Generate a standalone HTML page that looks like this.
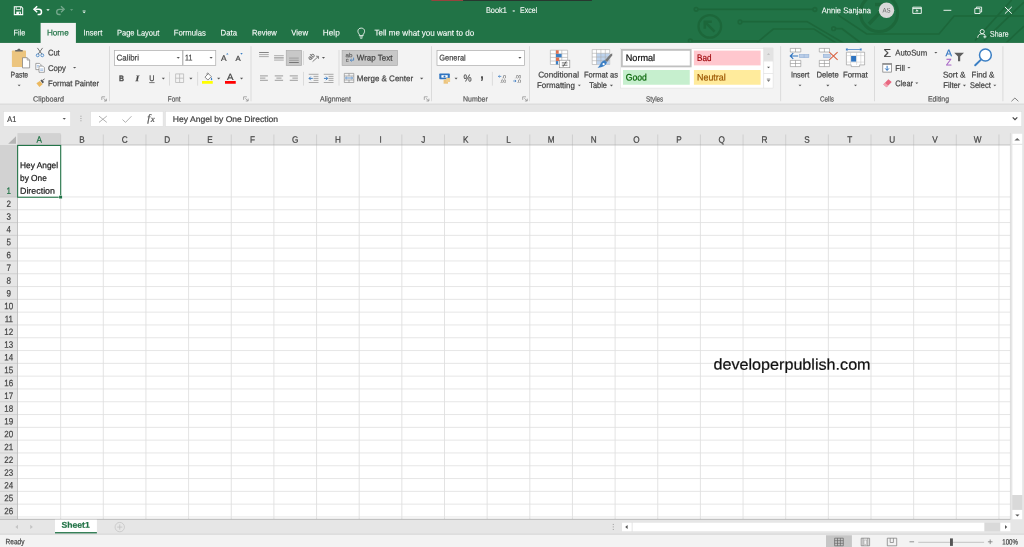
<!DOCTYPE html>
<html lang="en"><head><meta charset="utf-8"><title>Book1 - Excel</title>
<style>
html,body{margin:0;padding:0;background:#e6e6e6;overflow:hidden}
#app{position:relative;width:1024px;height:547px;overflow:hidden;font-family:"Liberation Sans",sans-serif}
#art{position:absolute;left:0;top:0}
#labels{position:absolute;left:0;top:0;width:1024px;height:547px;will-change:transform}
.t{position:absolute;left:0;top:0;white-space:nowrap;line-height:1;-webkit-text-stroke:.22px currentColor;transform-origin:0 0;font-family:"Liberation Sans",sans-serif}
</style></head>
<body>
<div id="app">
<svg id="art" width="1024" height="547" viewBox="0 0 1024 547">
<rect x="0.00" y="0.00" width="1024.00" height="547.00" fill="#e6e6e6" />
<rect x="0.00" y="0.00" width="1024.00" height="42.90" fill="#217346" />
<g fill="none" stroke="#1c6539" stroke-width="1.7" opacity=".85"><circle cx="696.1" cy="9.3" r="1.8"/><path d="M698 9.3H813"/><circle cx="814.9" cy="9.5" r="1.8"/><circle cx="709.8" cy="26.4" r="11.3" stroke-width="2.3"/><path d="M714.6 31.6L705 22M704.8 28.8V21.8H711.8" stroke-width="2.6"/><circle cx="740" cy="22" r="1.8"/><path d="M741.8 21.6H807L843.5 43"/><path d="M757 42.6L773.3 29H814L836 43"/><circle cx="833.6" cy="28.7" r="1.8"/><path d="M835.4 28.7H842L861 43"/><circle cx="690.3" cy="41" r="1.8"/><path d="M692.1 41H758"/><path d="M838 15L866.7 34H939L954.1 16H1024"/><circle cx="879" cy="12.9" r="18.6" stroke-width="3.2"/><path d="M869 24L886 6M875 4.500H887.5V17" stroke-width="3.4"/><path d="M1011.7 0L975 40.6M1024 2L984 40.6M1024 26L1006 43"/></g>
<rect x="431.40" y="0.00" width="31.70" height="0.80" fill="#b5373c" />
<rect x="463.10" y="0.00" width="128.80" height="0.80" fill="#2a2a2a" />
<line x1="0.00" y1="42.50" x2="1024.00" y2="42.50" stroke="#1a693c" stroke-width="0.9" />
<rect x="40.60" y="22.90" width="35.30" height="20.30" fill="#f3f3f3" />
<rect x="0.00" y="42.90" width="1024.00" height="60.90" fill="#f3f3f3" />
<line x1="0.00" y1="104.10" x2="1024.00" y2="104.10" stroke="#d2d2d2" stroke-width="0.7" />
<path d="M14.3 6.8H21.4L22.7 8.1V14.6H14.3Z" fill="none" stroke="#fff" stroke-width="1.05" />
<rect x="16.30" y="11.60" width="4.50" height="3.00" fill="#fff" />
<rect x="18.90" y="12.50" width="1.10" height="1.40" fill="#217346" />
<path d="M16.2 7V9.6H20.6V7" fill="none" stroke="#fff" stroke-width="0.8" />
<path d="M35.2 9.3H38.9A2.6 2.6 0 0 1 38.9 14.5H37.6" fill="none" stroke="#fff" stroke-width="1.5" />
<path d="M37.2 6.3L34 9.3L37.2 12.3" fill="none" stroke="#fff" stroke-width="1.5" />
<path d="M46.30 9.20H49.70L48.00 10.97Z" fill="#fff" stroke="none" stroke-width="1" />
<g opacity=".38">
<path d="M63 9.3H59.3A2.6 2.6 0 0 0 59.3 14.5H60.6" fill="none" stroke="#fff" stroke-width="1.3" />
<path d="M61 6.3L64.2 9.3L61 12.3" fill="none" stroke="#fff" stroke-width="1.3" />
<path d="M70.00 9.20H73.20L71.60 10.86Z" fill="#fff" stroke="none" stroke-width="1" />
</g>
<line x1="82.60" y1="10.90" x2="85.60" y2="10.90" stroke="#fff" stroke-width="0.7" />
<path d="M82.60 11.80H85.60L84.10 13.30Z" fill="#fff" stroke="none" stroke-width="1" />
<circle cx="886.50" cy="10.20" r="7.70" fill="#d9d9d9" stroke="none" stroke-width="1" />
<path d="M912.8 7.2H921.3V13.4H912.8Z" fill="none" stroke="#fff" stroke-width="0.9" />
<line x1="912.80" y1="8.60" x2="921.30" y2="8.60" stroke="#fff" stroke-width="0.9" />
<path d="M917 12.4V9.9M915.6 11.2L917 9.8L918.4 11.2" fill="none" stroke="#fff" stroke-width="0.8" />
<line x1="943.50" y1="10.30" x2="951.30" y2="10.30" stroke="#fff" stroke-width="0.9" />
<path d="M974.8 8.6H980V13.5H974.8Z" fill="none" stroke="#fff" stroke-width="0.85" />
<path d="M976.4 8.4V7.1H981.6V12H980.2" fill="none" stroke="#fff" stroke-width="0.85" />
<path d="M1004.9 6.9L1011.8 13.7M1011.8 6.9L1004.9 13.7" fill="none" stroke="#fff" stroke-width="0.95" />
<path d="M359.3 34.2C357.2 32.3 357.3 28.2 361.25 28.1C365.2 28.2 365.3 32.3 363.2 34.2V35.6H359.3Z" fill="none" stroke="#fff" stroke-width="0.85" />
<path d="M359.6 36.9H362.9M360.2 38.2H362.3" fill="none" stroke="#fff" stroke-width="0.8" />
<circle cx="982.20" cy="31.60" r="2.10" fill="none" stroke="#fff" stroke-width="0.85" />
<path d="M977.7 37.8C977.9 34.6 980 33.9 982.2 33.9C983.6 33.9 984.6 34.3 985.2 35" fill="none" stroke="#fff" stroke-width="0.85" />
<path d="M984.9 35.2V38.3M983.3 36.8H986.5" fill="none" stroke="#fff" stroke-width="0.8" />
<line x1="109.50" y1="46.25" x2="109.50" y2="101.25" stroke="#d4d4d4" stroke-width="0.8" />
<line x1="251.00" y1="46.25" x2="251.00" y2="101.25" stroke="#d4d4d4" stroke-width="0.8" />
<line x1="431.50" y1="46.25" x2="431.50" y2="101.25" stroke="#d4d4d4" stroke-width="0.8" />
<line x1="529.50" y1="46.25" x2="529.50" y2="101.25" stroke="#d4d4d4" stroke-width="0.8" />
<line x1="780.60" y1="46.25" x2="780.60" y2="101.25" stroke="#d4d4d4" stroke-width="0.8" />
<line x1="874.50" y1="46.25" x2="874.50" y2="101.25" stroke="#d4d4d4" stroke-width="0.8" />
<line x1="1002.90" y1="46.25" x2="1002.90" y2="101.25" stroke="#d4d4d4" stroke-width="0.8" />
<path d="M105.10 96.80H101.80V99.90" fill="none" stroke="#777" stroke-width="0.6" />
<path d="M103.50 98.40L106.10 100.70" fill="none" stroke="#777" stroke-width="0.6" />
<path d="M106.40 98.70V101.00H104.00" fill="none" stroke="#777" stroke-width="0.6" />
<path d="M246.90 96.80H243.60V99.90" fill="none" stroke="#777" stroke-width="0.6" />
<path d="M245.30 98.40L247.90 100.70" fill="none" stroke="#777" stroke-width="0.6" />
<path d="M248.20 98.70V101.00H245.80" fill="none" stroke="#777" stroke-width="0.6" />
<path d="M427.60 96.80H424.30V99.90" fill="none" stroke="#777" stroke-width="0.6" />
<path d="M426.00 98.40L428.60 100.70" fill="none" stroke="#777" stroke-width="0.6" />
<path d="M428.90 98.70V101.00H426.50" fill="none" stroke="#777" stroke-width="0.6" />
<path d="M526.00 96.80H522.70V99.90" fill="none" stroke="#777" stroke-width="0.6" />
<path d="M524.40 98.40L527.00 100.70" fill="none" stroke="#777" stroke-width="0.6" />
<path d="M527.30 98.70V101.00H524.90" fill="none" stroke="#777" stroke-width="0.6" />
<rect x="11.90" y="50.60" width="14.10" height="16.30" fill="#ecc57f" rx=".7"/>
<path d="M15.2 51.6V50.1H17.3C17.4 48.4 20.5 48.4 20.6 50.1H22.7V51.6Z" fill="#666" stroke="none" stroke-width="1" />
<path d="M22.5 57.7H27.2L29.6 60.1V67.9H22.5Z" fill="#fff" stroke="#7a7a7a" stroke-width="0.7" />
<path d="M27.2 57.7V60.1H29.6" fill="none" stroke="#7a7a7a" stroke-width="0.6" />
<path d="M17.60 84.80H20.60L19.10 86.36Z" fill="#555" stroke="none" stroke-width="1" />
<path d="M37.4 47.9L41.9 54.2M42.6 47.9L38.1 54.2" fill="none" stroke="#666" stroke-width="0.9" />
<circle cx="37.70" cy="55.30" r="1.45" fill="none" stroke="#3b7fc4" stroke-width="0.8" />
<circle cx="42.30" cy="55.30" r="1.45" fill="none" stroke="#3b7fc4" stroke-width="0.8" />
<path d="M35.8 63.4H39.6L41 64.8V69.6H35.8Z" fill="#fff" stroke="#777" stroke-width="0.65" />
<path d="M39 66.1H42.9L44.4 67.6V72.3H39Z" fill="#fff" stroke="#777" stroke-width="0.65" />
<path d="M36.9 65.6H39M36.9 67H38.2M40.2 69H43.2M40.2 70.4H43.2" fill="none" stroke="#5b8fd0" stroke-width="0.55" />
<path d="M73.00 66.90H76.20L74.60 68.56Z" fill="#555" stroke="none" stroke-width="1" />
<path d="M36.4 83.3L39.8 80.9L42.6 84.3L39.4 86.9Z" fill="#ecb95f" stroke="none" stroke-width="1" />
<path d="M40.4 80.6L41.9 79.5L44 82.1L42.6 83.4Z" fill="#555" stroke="none" stroke-width="1" />
<path d="M42.6 80.3L44.6 78.9" fill="none" stroke="#555" stroke-width="0.9" />
<rect x="114.50" y="50.40" width="68.20" height="15.20" fill="#fff" stroke="#ababab" stroke-width=".7"/>
<rect x="183.00" y="50.40" width="32.75" height="15.20" fill="#fff" stroke="#ababab" stroke-width=".7"/>
<path d="M176.60 57.10H179.90L178.25 58.82Z" fill="#555" stroke="none" stroke-width="1" />
<path d="M209.50 57.10H212.70L211.10 58.76Z" fill="#555" stroke="none" stroke-width="1" />
<path d="M226.1 54.6L227.3 53L228.5 54.6Z" fill="#3b7fc4" stroke="none" stroke-width="1" />
<path d="M240.3 53.1L241.5 54.7L242.7 53.1Z" fill="#3b7fc4" stroke="none" stroke-width="1" />
<line x1="149.20" y1="82.60" x2="154.60" y2="82.60" stroke="#444" stroke-width="0.7" />
<path d="M161.80 77.80H164.90L163.35 79.41Z" fill="#555" stroke="none" stroke-width="1" />
<line x1="169.50" y1="71.90" x2="169.50" y2="85.60" stroke="#d4d4d4" stroke-width="0.8" />
<line x1="197.60" y1="71.90" x2="197.60" y2="85.60" stroke="#d4d4d4" stroke-width="0.8" />
<path d="M175.6 73.9H183.6V82.5H175.6ZM179.6 73.9V82.5M175.6 78.2H183.6" fill="none" stroke="#b9b9b9" stroke-width="0.8" />
<path d="M189.30 77.80H192.50L190.90 79.46Z" fill="#555" stroke="none" stroke-width="1" />
<path d="M205 77.1L208.3 73.6L211.3 76.6L207.9 80.1Z" fill="#fff" stroke="#666" stroke-width="0.75" />
<path d="M207 74.7C206.3 72.6 208.6 72.4 208.6 74.2" fill="none" stroke="#666" stroke-width="0.6" />
<path d="M211.4 77.3C212.6 78.8 212.4 80.2 211.5 80.2C210.6 80.2 210.6 78.9 211.4 77.3Z" fill="#3b7fc4" stroke="none" stroke-width="1" />
<rect x="202.00" y="81.00" width="10.75" height="2.75" fill="#ffff00" />
<path d="M217.10 77.80H220.30L218.70 79.46Z" fill="#555" stroke="none" stroke-width="1" />
<rect x="225.00" y="81.00" width="10.75" height="2.75" fill="#f00" />
<path d="M240.00 77.80H243.10L241.55 79.41Z" fill="#555" stroke="none" stroke-width="1" />
<line x1="259.10" y1="52.50" x2="268.75" y2="52.50" stroke="#666" stroke-width="0.8" />
<line x1="259.10" y1="54.60" x2="268.75" y2="54.60" stroke="#8c8c8c" stroke-width="0.7" />
<line x1="259.10" y1="56.60" x2="268.75" y2="56.60" stroke="#8c8c8c" stroke-width="0.7" />
<line x1="274.10" y1="55.70" x2="283.75" y2="55.70" stroke="#8c8c8c" stroke-width="0.7" />
<line x1="274.10" y1="57.90" x2="283.75" y2="57.90" stroke="#666" stroke-width="0.8" />
<line x1="274.10" y1="60.10" x2="283.75" y2="60.10" stroke="#8c8c8c" stroke-width="0.7" />
<rect x="286.25" y="50.40" width="15.35" height="15.20" fill="#c8c8c8" stroke="#ababab" stroke-width=".7"/>
<line x1="289.10" y1="58.10" x2="298.75" y2="58.10" stroke="#8a8a8a" stroke-width="0.7" />
<line x1="289.10" y1="60.30" x2="298.75" y2="60.30" stroke="#8a8a8a" stroke-width="0.7" />
<line x1="289.10" y1="62.50" x2="298.75" y2="62.50" stroke="#606060" stroke-width="0.8" />
<line x1="303.50" y1="51.00" x2="303.50" y2="65.00" stroke="#d4d4d4" stroke-width="0.8" />
<line x1="303.50" y1="71.90" x2="303.50" y2="85.60" stroke="#d4d4d4" stroke-width="0.8" />
<path d="M312.6 61.6L318.3 56.6M316 56.2L318.5 56.4L318.4 58.9" fill="none" stroke="#666" stroke-width="0.8" />
<path d="M321.90 57.10H325.00L323.45 58.71Z" fill="#555" stroke="none" stroke-width="1" />
<line x1="260.00" y1="75.90" x2="267.90" y2="75.90" stroke="#808080" stroke-width="0.75" />
<line x1="260.00" y1="80.30" x2="267.90" y2="80.30" stroke="#808080" stroke-width="0.75" />
<line x1="260.00" y1="78.10" x2="265.40" y2="78.10" stroke="#808080" stroke-width="0.75" />
<line x1="274.75" y1="75.90" x2="283.10" y2="75.90" stroke="#808080" stroke-width="0.75" />
<line x1="274.75" y1="80.30" x2="283.10" y2="80.30" stroke="#808080" stroke-width="0.75" />
<line x1="276.40" y1="78.10" x2="281.50" y2="78.10" stroke="#808080" stroke-width="0.75" />
<line x1="289.75" y1="75.90" x2="297.90" y2="75.90" stroke="#808080" stroke-width="0.75" />
<line x1="289.75" y1="80.30" x2="297.90" y2="80.30" stroke="#808080" stroke-width="0.75" />
<line x1="292.40" y1="78.10" x2="297.90" y2="78.10" stroke="#808080" stroke-width="0.75" />
<line x1="308.75" y1="74.30" x2="318.50" y2="74.30" stroke="#8a8a8a" stroke-width="0.7" />
<line x1="308.75" y1="82.50" x2="318.50" y2="82.50" stroke="#8a8a8a" stroke-width="0.7" />
<line x1="313.55" y1="76.40" x2="318.50" y2="76.40" stroke="#8a8a8a" stroke-width="0.7" />
<line x1="313.55" y1="78.40" x2="318.50" y2="78.40" stroke="#8a8a8a" stroke-width="0.7" />
<line x1="313.55" y1="80.40" x2="318.50" y2="80.40" stroke="#8a8a8a" stroke-width="0.7" />
<path d="M312.75 78.4H309.15M310.75 76.6L309.05 78.4L310.75 80.2" fill="none" stroke="#2f74c0" stroke-width="0.9" />
<line x1="323.75" y1="74.30" x2="333.50" y2="74.30" stroke="#8a8a8a" stroke-width="0.7" />
<line x1="323.75" y1="82.50" x2="333.50" y2="82.50" stroke="#8a8a8a" stroke-width="0.7" />
<line x1="328.55" y1="76.40" x2="333.50" y2="76.40" stroke="#8a8a8a" stroke-width="0.7" />
<line x1="328.55" y1="78.40" x2="333.50" y2="78.40" stroke="#8a8a8a" stroke-width="0.7" />
<line x1="328.55" y1="80.40" x2="333.50" y2="80.40" stroke="#8a8a8a" stroke-width="0.7" />
<path d="M323.95 78.4H327.55M325.95 76.6L327.65 78.4L325.95 80.2" fill="none" stroke="#2f74c0" stroke-width="0.9" />
<line x1="339.00" y1="50.00" x2="339.00" y2="85.60" stroke="#d4d4d4" stroke-width="0.8" />
<rect x="342.10" y="50.40" width="55.30" height="15.20" fill="#c8c8c8" stroke="#ababab" stroke-width=".7"/>
<path d="M353.6 57.6V60.2H350.4M351.7 58.9L350.3 60.2L351.7 61.5" fill="none" stroke="#2f74c0" stroke-width="0.7" />
<path d="M344.3 73.4H353.8V82.5H344.3ZM344.3 76H353.8M344.3 80H353.8M349 73.4V76M349 80V82.5" fill="none" stroke="#8a8a8a" stroke-width="0.65" />
<path d="M345.6 78H352.5M346.6 77L345.5 78L346.6 79M351.5 77L352.6 78L351.5 79" fill="none" stroke="#2f74c0" stroke-width="0.7" />
<path d="M420.00 77.80H423.30L421.65 79.52Z" fill="#555" stroke="none" stroke-width="1" />
<rect x="437.00" y="50.40" width="87.60" height="15.20" fill="#fff" stroke="#ababab" stroke-width=".7"/>
<path d="M518.30 57.10H521.50L519.90 58.76Z" fill="#555" stroke="none" stroke-width="1" />
<rect x="439.30" y="73.60" width="10.50" height="5.60" fill="#2f74c0" rx=".6"/>
<rect x="441.40" y="75.20" width="6.30" height="2.40" fill="#fff" />
<circle cx="444.50" cy="76.40" r="1.00" fill="#2f74c0" stroke="none" stroke-width="1" />
<rect x="443.60" y="79.60" width="4.40" height="4.10" fill="#ecc57f" />
<rect x="446.20" y="77.90" width="3.90" height="4.10" fill="#f0cd8e" />
<path d="M454.50 77.80H457.60L456.05 79.41Z" fill="#555" stroke="none" stroke-width="1" />
<line x1="492.40" y1="71.90" x2="492.40" y2="85.60" stroke="#d4d4d4" stroke-width="0.8" />
<path d="M501.3 76.4H498.5M499.6 75.3L498.4 76.4L499.6 77.5" fill="none" stroke="#2f74c0" stroke-width="0.7" />
<path d="M513.2 81H516M514.9 79.9L516.1 81L514.9 82.1" fill="none" stroke="#2f74c0" stroke-width="0.7" />
<path d="M550.4 50.2H567.6V64.5H550.4ZM550.4 53.8H567.6M550.4 57.4H567.6M550.4 61H567.6M556 50.2V64.5M561.8 50.2V64.5" fill="#fff" stroke="#a8a8a8" stroke-width="0.6" />
<rect x="556.00" y="50.30" width="2.70" height="3.50" fill="#e0704f" />
<rect x="556.00" y="53.90" width="5.60" height="3.40" fill="#3b7fc4" />
<rect x="556.00" y="57.50" width="3.20" height="3.50" fill="#e0704f" />
<rect x="556.00" y="61.10" width="2.20" height="3.30" fill="#3b7fc4" />
<rect x="559.40" y="60.20" width="10.40" height="7.50" fill="#fff" stroke="#8a8a8a" stroke-width=".65"/>
<path d="M561.8 62.9H567.5M561.8 65.2H567.5M566.3 61.3L563 66.8" fill="none" stroke="#333" stroke-width="0.7" />
<path d="M577.80 84.80H580.80L579.30 86.36Z" fill="#555" stroke="none" stroke-width="1" />
<path d="M592.2 49.6H609.7V64.5H592.2Z" fill="#fff" stroke="#a8a8a8" stroke-width="0.6" />
<rect x="596.60" y="53.40" width="13.00" height="11.00" fill="#bdd3ee" />
<path d="M592.2 53.3H609.7M592.2 57H609.7M592.2 60.7H609.7M596.5 49.6V64.5M600.9 49.6V64.5M605.3 49.6V64.5" fill="none" stroke="#a8a8a8" stroke-width="0.55" />
<path d="M612.2 55.4L607 62L604.9 60.2L610.6 53.9L612.3 53.6Z" fill="#777" stroke="none" stroke-width="1" />
<path d="M606.9 62.2C606.4 65.6 600.8 68.2 597.4 67.6C600.4 66.3 600.6 61.2 604.7 60.3Z" fill="#3b7fc4" stroke="none" stroke-width="1" />
<circle cx="603.60" cy="64.20" r="1.10" fill="#fff" stroke="none" stroke-width="1" />
<path d="M609.90 84.80H613.00L611.45 86.41Z" fill="#555" stroke="none" stroke-width="1" />
<rect x="620.50" y="48.40" width="152.60" height="39.70" fill="#fff" stroke="#e1e1e1" stroke-width=".6"/>
<rect x="621.90" y="49.90" width="68.80" height="16.50" fill="#fff" stroke="#c0c0c0" stroke-width="1.8"/>
<rect x="693.90" y="50.60" width="66.70" height="14.80" fill="#ffc7ce" />
<rect x="623.00" y="70.00" width="66.75" height="14.75" fill="#c6efce" />
<rect x="693.90" y="70.00" width="66.70" height="14.75" fill="#ffeb9c" />
<rect x="763.75" y="47.50" width="9.35" height="13.30" fill="#e3e3e3" />
<line x1="763.60" y1="47.50" x2="763.60" y2="88.10" stroke="#dcdcdc" stroke-width="0.6" />
<line x1="763.60" y1="61.10" x2="773.10" y2="61.10" stroke="#dcdcdc" stroke-width="0.6" />
<line x1="763.60" y1="73.50" x2="773.10" y2="73.50" stroke="#dcdcdc" stroke-width="0.6" />
<path d="M767 54.8L768.5 53.2L770 54.8Z" fill="#b8b8b8" stroke="none" stroke-width="1" />
<path d="M767.00 66.70H770.10L768.55 68.31Z" fill="#555" stroke="none" stroke-width="1" />
<line x1="766.80" y1="79.10" x2="770.30" y2="79.10" stroke="#555" stroke-width="0.7" />
<path d="M767.00 80.20H770.10L768.55 81.81Z" fill="#555" stroke="none" stroke-width="1" />
<path d="M790.3 48.4H800.8V52H790.3ZM795.5 48.4V52" fill="#fff" stroke="#8e8e8e" stroke-width="0.6" />
<path d="M790.3 60.4H800.8V66.6H790.3ZM795.5 60.4V66.6M790.3 63.5H800.8" fill="#fff" stroke="#8e8e8e" stroke-width="0.6" />
<rect x="799.30" y="54.40" width="9.60" height="3.30" fill="#b9cde8" stroke="#8aa9d2" stroke-width=".5"/>
<line x1="804.10" y1="54.40" x2="804.10" y2="57.70" stroke="#8aa9d2" stroke-width="0.5" />
<path d="M798.2 56H790.6M793.2 53.2L790.3 56L793.2 58.8" fill="none" stroke="#2f74c0" stroke-width="1.15" />
<path d="M798.50 84.80H801.50L800.00 86.36Z" fill="#555" stroke="none" stroke-width="1" />
<path d="M819.3 48.4H829.5V52H819.3ZM824.4 48.4V52" fill="#fff" stroke="#8e8e8e" stroke-width="0.6" />
<path d="M819.3 60.4H829.5V66.6H819.3ZM824.4 60.4V66.6M819.3 63.5H829.5" fill="#fff" stroke="#8e8e8e" stroke-width="0.6" />
<rect x="823.30" y="54.40" width="7.00" height="3.30" fill="#b9cde8" stroke="#8aa9d2" stroke-width=".5"/>
<path d="M829.3 52.2L837.6 59.8M837.6 52.2L829.3 59.8" fill="none" stroke="#d9603f" stroke-width="1.05" />
<path d="M826.30 84.80H829.40L827.85 86.41Z" fill="#555" stroke="none" stroke-width="1" />
<path d="M846.4 49.5H861.2M846.4 48.3V50.7M861.2 48.3V50.7M847.8 48.5L846.6 49.5L847.8 50.5M859.8 48.5L861 49.5L859.8 50.5" fill="none" stroke="#2f74c0" stroke-width="0.7" />
<path d="M846.4 52.2H864.6V64.9H859.6V66.6H851.2V64.9H846.4Z" fill="#fff" stroke="#8e8e8e" stroke-width="0.6" />
<path d="M850.6 52.2V64.9M856.6 52.2V64.9M860.8 52.2V64.9M846.4 55.6H864.6M846.4 62.1H864.6" fill="none" stroke="#c4c4c4" stroke-width="0.5" />
<rect x="851.10" y="56.00" width="5.00" height="5.60" fill="#2f74c0" />
<path d="M854.00 84.80H857.00L855.50 86.36Z" fill="#555" stroke="none" stroke-width="1" />
<path d="M934.30 52.00H937.40L935.85 53.61Z" fill="#555" stroke="none" stroke-width="1" />
<rect x="882.80" y="63.50" width="8.60" height="8.60" fill="#fff" stroke="#777" stroke-width=".7"/>
<line x1="882.80" y1="64.30" x2="891.40" y2="64.30" stroke="#777" stroke-width="0.9" />
<path d="M887.1 65.8V70.3M885.2 68.4L887.1 70.4L889 68.4" fill="none" stroke="#2f74c0" stroke-width="1" />
<path d="M907.40 66.90H910.50L908.95 68.51Z" fill="#555" stroke="none" stroke-width="1" />
<path d="M883.3 84.4L888.4 79.2L891.7 82L886.6 87.2Z" fill="#e8677f" stroke="none" stroke-width="1" />
<path d="M883.3 84.4L884.9 82.8L888.2 85.6L886.6 87.2Z" fill="#f3a3b2" stroke="none" stroke-width="1" />
<path d="M915.30 82.50H918.30L916.80 84.06Z" fill="#555" stroke="none" stroke-width="1" />
<path d="M954.2 52.7H964L960.2 56.6V61.3H958V56.6Z" fill="#5f5f5f" stroke="none" stroke-width="1" />
<path d="M962.90 84.80H966.00L964.45 86.41Z" fill="#555" stroke="none" stroke-width="1" />
<circle cx="985.40" cy="55.00" r="5.90" fill="#fff" stroke="#3b7fc4" stroke-width="1.5" />
<path d="M981 59.6L975.2 65.3" fill="none" stroke="#3b7fc4" stroke-width="2" stroke-linecap="round"/>
<path d="M993.30 84.80H996.30L994.80 86.36Z" fill="#555" stroke="none" stroke-width="1" />
<path d="M1011.4 101.3L1014.9 98L1018.4 101.3" fill="none" stroke="#666" stroke-width="0.8" />
<rect x="3.50" y="111.50" width="67.10" height="14.75" fill="#fff" stroke="#dcdcdc" stroke-width=".5"/>
<rect x="90.75" y="111.50" width="72.35" height="14.75" fill="#fff" stroke="#dcdcdc" stroke-width=".5"/>
<rect x="165.50" y="111.50" width="856.25" height="14.75" fill="#fff" stroke="#dcdcdc" stroke-width=".5"/>
<path d="M62.60 118.10H65.90L64.25 119.82Z" fill="#555" stroke="none" stroke-width="1" />
<rect x="80.50" y="115.75" width="0.90" height="0.90" fill="#8c8c8c" />
<rect x="80.50" y="118.05" width="0.90" height="0.90" fill="#8c8c8c" />
<rect x="80.50" y="120.35" width="0.90" height="0.90" fill="#8c8c8c" />
<path d="M99 116.1L106.8 122.4M106.8 116.1L99 122.4" fill="none" stroke="#adadad" stroke-width="0.95" />
<path d="M122.5 119.6L125.5 122.4L131.5 116.2" fill="none" stroke="#adadad" stroke-width="0.95" />
<path d="M1012.7 117.3L1015 119.6L1017.3 117.3" fill="none" stroke="#444" stroke-width="1.2" />
<rect x="17.60" y="145.00" width="992.80" height="374.25" fill="#fff" />
<rect x="17.40" y="133.10" width="43.25" height="11.90" fill="#d2d2d2" />
<rect x="0.00" y="145.00" width="17.40" height="52.30" fill="#d2d2d2" />
<path d="M16 136.3V143.8H8.2Z" fill="#b4b4b4" stroke="none" stroke-width="1" />
<line x1="60.65" y1="145.00" x2="60.65" y2="519.25" stroke="#dcdcdc" stroke-width="0.8" />
<line x1="60.65" y1="134.50" x2="60.65" y2="145.00" stroke="#c6c6c6" stroke-width="0.7" />
<line x1="103.30" y1="145.00" x2="103.30" y2="519.25" stroke="#dcdcdc" stroke-width="0.8" />
<line x1="103.30" y1="134.50" x2="103.30" y2="145.00" stroke="#c6c6c6" stroke-width="0.7" />
<line x1="145.95" y1="145.00" x2="145.95" y2="519.25" stroke="#dcdcdc" stroke-width="0.8" />
<line x1="145.95" y1="134.50" x2="145.95" y2="145.00" stroke="#c6c6c6" stroke-width="0.7" />
<line x1="188.60" y1="145.00" x2="188.60" y2="519.25" stroke="#dcdcdc" stroke-width="0.8" />
<line x1="188.60" y1="134.50" x2="188.60" y2="145.00" stroke="#c6c6c6" stroke-width="0.7" />
<line x1="231.25" y1="145.00" x2="231.25" y2="519.25" stroke="#dcdcdc" stroke-width="0.8" />
<line x1="231.25" y1="134.50" x2="231.25" y2="145.00" stroke="#c6c6c6" stroke-width="0.7" />
<line x1="273.90" y1="145.00" x2="273.90" y2="519.25" stroke="#dcdcdc" stroke-width="0.8" />
<line x1="273.90" y1="134.50" x2="273.90" y2="145.00" stroke="#c6c6c6" stroke-width="0.7" />
<line x1="316.55" y1="145.00" x2="316.55" y2="519.25" stroke="#dcdcdc" stroke-width="0.8" />
<line x1="316.55" y1="134.50" x2="316.55" y2="145.00" stroke="#c6c6c6" stroke-width="0.7" />
<line x1="359.20" y1="145.00" x2="359.20" y2="519.25" stroke="#dcdcdc" stroke-width="0.8" />
<line x1="359.20" y1="134.50" x2="359.20" y2="145.00" stroke="#c6c6c6" stroke-width="0.7" />
<line x1="401.85" y1="145.00" x2="401.85" y2="519.25" stroke="#dcdcdc" stroke-width="0.8" />
<line x1="401.85" y1="134.50" x2="401.85" y2="145.00" stroke="#c6c6c6" stroke-width="0.7" />
<line x1="444.50" y1="145.00" x2="444.50" y2="519.25" stroke="#dcdcdc" stroke-width="0.8" />
<line x1="444.50" y1="134.50" x2="444.50" y2="145.00" stroke="#c6c6c6" stroke-width="0.7" />
<line x1="487.15" y1="145.00" x2="487.15" y2="519.25" stroke="#dcdcdc" stroke-width="0.8" />
<line x1="487.15" y1="134.50" x2="487.15" y2="145.00" stroke="#c6c6c6" stroke-width="0.7" />
<line x1="529.80" y1="145.00" x2="529.80" y2="519.25" stroke="#dcdcdc" stroke-width="0.8" />
<line x1="529.80" y1="134.50" x2="529.80" y2="145.00" stroke="#c6c6c6" stroke-width="0.7" />
<line x1="572.45" y1="145.00" x2="572.45" y2="519.25" stroke="#dcdcdc" stroke-width="0.8" />
<line x1="572.45" y1="134.50" x2="572.45" y2="145.00" stroke="#c6c6c6" stroke-width="0.7" />
<line x1="615.10" y1="145.00" x2="615.10" y2="519.25" stroke="#dcdcdc" stroke-width="0.8" />
<line x1="615.10" y1="134.50" x2="615.10" y2="145.00" stroke="#c6c6c6" stroke-width="0.7" />
<line x1="657.75" y1="145.00" x2="657.75" y2="519.25" stroke="#dcdcdc" stroke-width="0.8" />
<line x1="657.75" y1="134.50" x2="657.75" y2="145.00" stroke="#c6c6c6" stroke-width="0.7" />
<line x1="700.40" y1="145.00" x2="700.40" y2="519.25" stroke="#dcdcdc" stroke-width="0.8" />
<line x1="700.40" y1="134.50" x2="700.40" y2="145.00" stroke="#c6c6c6" stroke-width="0.7" />
<line x1="743.05" y1="145.00" x2="743.05" y2="519.25" stroke="#dcdcdc" stroke-width="0.8" />
<line x1="743.05" y1="134.50" x2="743.05" y2="145.00" stroke="#c6c6c6" stroke-width="0.7" />
<line x1="785.70" y1="145.00" x2="785.70" y2="519.25" stroke="#dcdcdc" stroke-width="0.8" />
<line x1="785.70" y1="134.50" x2="785.70" y2="145.00" stroke="#c6c6c6" stroke-width="0.7" />
<line x1="828.35" y1="145.00" x2="828.35" y2="519.25" stroke="#dcdcdc" stroke-width="0.8" />
<line x1="828.35" y1="134.50" x2="828.35" y2="145.00" stroke="#c6c6c6" stroke-width="0.7" />
<line x1="871.00" y1="145.00" x2="871.00" y2="519.25" stroke="#dcdcdc" stroke-width="0.8" />
<line x1="871.00" y1="134.50" x2="871.00" y2="145.00" stroke="#c6c6c6" stroke-width="0.7" />
<line x1="913.65" y1="145.00" x2="913.65" y2="519.25" stroke="#dcdcdc" stroke-width="0.8" />
<line x1="913.65" y1="134.50" x2="913.65" y2="145.00" stroke="#c6c6c6" stroke-width="0.7" />
<line x1="956.30" y1="145.00" x2="956.30" y2="519.25" stroke="#dcdcdc" stroke-width="0.8" />
<line x1="956.30" y1="134.50" x2="956.30" y2="145.00" stroke="#c6c6c6" stroke-width="0.7" />
<line x1="998.95" y1="145.00" x2="998.95" y2="519.25" stroke="#dcdcdc" stroke-width="0.8" />
<line x1="998.95" y1="134.50" x2="998.95" y2="145.00" stroke="#c6c6c6" stroke-width="0.7" />
<line x1="18.00" y1="196.95" x2="1010.40" y2="196.95" stroke="#e0e0e0" stroke-width="0.8" />
<line x1="0.00" y1="196.95" x2="17.40" y2="196.95" stroke="#c6c6c6" stroke-width="0.7" />
<line x1="18.00" y1="209.75" x2="1010.40" y2="209.75" stroke="#e0e0e0" stroke-width="0.8" />
<line x1="0.00" y1="209.75" x2="17.40" y2="209.75" stroke="#c6c6c6" stroke-width="0.7" />
<line x1="18.00" y1="222.55" x2="1010.40" y2="222.55" stroke="#e0e0e0" stroke-width="0.8" />
<line x1="0.00" y1="222.55" x2="17.40" y2="222.55" stroke="#c6c6c6" stroke-width="0.7" />
<line x1="18.00" y1="235.35" x2="1010.40" y2="235.35" stroke="#e0e0e0" stroke-width="0.8" />
<line x1="0.00" y1="235.35" x2="17.40" y2="235.35" stroke="#c6c6c6" stroke-width="0.7" />
<line x1="18.00" y1="248.15" x2="1010.40" y2="248.15" stroke="#e0e0e0" stroke-width="0.8" />
<line x1="0.00" y1="248.15" x2="17.40" y2="248.15" stroke="#c6c6c6" stroke-width="0.7" />
<line x1="18.00" y1="260.95" x2="1010.40" y2="260.95" stroke="#e0e0e0" stroke-width="0.8" />
<line x1="0.00" y1="260.95" x2="17.40" y2="260.95" stroke="#c6c6c6" stroke-width="0.7" />
<line x1="18.00" y1="273.75" x2="1010.40" y2="273.75" stroke="#e0e0e0" stroke-width="0.8" />
<line x1="0.00" y1="273.75" x2="17.40" y2="273.75" stroke="#c6c6c6" stroke-width="0.7" />
<line x1="18.00" y1="286.55" x2="1010.40" y2="286.55" stroke="#e0e0e0" stroke-width="0.8" />
<line x1="0.00" y1="286.55" x2="17.40" y2="286.55" stroke="#c6c6c6" stroke-width="0.7" />
<line x1="18.00" y1="299.35" x2="1010.40" y2="299.35" stroke="#e0e0e0" stroke-width="0.8" />
<line x1="0.00" y1="299.35" x2="17.40" y2="299.35" stroke="#c6c6c6" stroke-width="0.7" />
<line x1="18.00" y1="312.15" x2="1010.40" y2="312.15" stroke="#e0e0e0" stroke-width="0.8" />
<line x1="0.00" y1="312.15" x2="17.40" y2="312.15" stroke="#c6c6c6" stroke-width="0.7" />
<line x1="18.00" y1="324.95" x2="1010.40" y2="324.95" stroke="#e0e0e0" stroke-width="0.8" />
<line x1="0.00" y1="324.95" x2="17.40" y2="324.95" stroke="#c6c6c6" stroke-width="0.7" />
<line x1="18.00" y1="337.75" x2="1010.40" y2="337.75" stroke="#e0e0e0" stroke-width="0.8" />
<line x1="0.00" y1="337.75" x2="17.40" y2="337.75" stroke="#c6c6c6" stroke-width="0.7" />
<line x1="18.00" y1="350.55" x2="1010.40" y2="350.55" stroke="#e0e0e0" stroke-width="0.8" />
<line x1="0.00" y1="350.55" x2="17.40" y2="350.55" stroke="#c6c6c6" stroke-width="0.7" />
<line x1="18.00" y1="363.35" x2="1010.40" y2="363.35" stroke="#e0e0e0" stroke-width="0.8" />
<line x1="0.00" y1="363.35" x2="17.40" y2="363.35" stroke="#c6c6c6" stroke-width="0.7" />
<line x1="18.00" y1="376.15" x2="1010.40" y2="376.15" stroke="#e0e0e0" stroke-width="0.8" />
<line x1="0.00" y1="376.15" x2="17.40" y2="376.15" stroke="#c6c6c6" stroke-width="0.7" />
<line x1="18.00" y1="388.95" x2="1010.40" y2="388.95" stroke="#e0e0e0" stroke-width="0.8" />
<line x1="0.00" y1="388.95" x2="17.40" y2="388.95" stroke="#c6c6c6" stroke-width="0.7" />
<line x1="18.00" y1="401.75" x2="1010.40" y2="401.75" stroke="#e0e0e0" stroke-width="0.8" />
<line x1="0.00" y1="401.75" x2="17.40" y2="401.75" stroke="#c6c6c6" stroke-width="0.7" />
<line x1="18.00" y1="414.55" x2="1010.40" y2="414.55" stroke="#e0e0e0" stroke-width="0.8" />
<line x1="0.00" y1="414.55" x2="17.40" y2="414.55" stroke="#c6c6c6" stroke-width="0.7" />
<line x1="18.00" y1="427.35" x2="1010.40" y2="427.35" stroke="#e0e0e0" stroke-width="0.8" />
<line x1="0.00" y1="427.35" x2="17.40" y2="427.35" stroke="#c6c6c6" stroke-width="0.7" />
<line x1="18.00" y1="440.15" x2="1010.40" y2="440.15" stroke="#e0e0e0" stroke-width="0.8" />
<line x1="0.00" y1="440.15" x2="17.40" y2="440.15" stroke="#c6c6c6" stroke-width="0.7" />
<line x1="18.00" y1="452.95" x2="1010.40" y2="452.95" stroke="#e0e0e0" stroke-width="0.8" />
<line x1="0.00" y1="452.95" x2="17.40" y2="452.95" stroke="#c6c6c6" stroke-width="0.7" />
<line x1="18.00" y1="465.75" x2="1010.40" y2="465.75" stroke="#e0e0e0" stroke-width="0.8" />
<line x1="0.00" y1="465.75" x2="17.40" y2="465.75" stroke="#c6c6c6" stroke-width="0.7" />
<line x1="18.00" y1="478.55" x2="1010.40" y2="478.55" stroke="#e0e0e0" stroke-width="0.8" />
<line x1="0.00" y1="478.55" x2="17.40" y2="478.55" stroke="#c6c6c6" stroke-width="0.7" />
<line x1="18.00" y1="491.35" x2="1010.40" y2="491.35" stroke="#e0e0e0" stroke-width="0.8" />
<line x1="0.00" y1="491.35" x2="17.40" y2="491.35" stroke="#c6c6c6" stroke-width="0.7" />
<line x1="18.00" y1="504.15" x2="1010.40" y2="504.15" stroke="#e0e0e0" stroke-width="0.8" />
<line x1="0.00" y1="504.15" x2="17.40" y2="504.15" stroke="#c6c6c6" stroke-width="0.7" />
<line x1="18.00" y1="516.95" x2="1010.40" y2="516.95" stroke="#e0e0e0" stroke-width="0.8" />
<line x1="0.00" y1="516.95" x2="17.40" y2="516.95" stroke="#c6c6c6" stroke-width="0.7" />
<line x1="17.50" y1="145.00" x2="1010.40" y2="145.00" stroke="#b0b0b0" stroke-width="0.7" />
<line x1="17.50" y1="145.00" x2="17.50" y2="519.25" stroke="#b0b0b0" stroke-width="0.7" />
<line x1="1010.40" y1="133.10" x2="1010.40" y2="519.25" stroke="#cfcfcf" stroke-width="0.6" />
<rect x="17.65" y="145.45" width="43.05" height="51.8" fill="none" stroke="#217346" stroke-width="1.07"/>
<rect x="58.70" y="195.30" width="3.70" height="3.50" fill="#fff" />
<rect x="59.10" y="195.70" width="3.00" height="2.80" fill="#217346" />
<rect x="1012.40" y="133.75" width="9.80" height="10.00" fill="#fff" />
<path d="M1014.4 140.6L1017.2 137.9L1020 140.6Z" fill="#666" stroke="none" stroke-width="1" />
<rect x="1012.40" y="145.00" width="9.80" height="350.00" fill="#fff" />
<rect x="1012.40" y="495.00" width="9.80" height="14.70" fill="#d9d9d9" />
<rect x="1012.40" y="510.00" width="9.80" height="9.25" fill="#fff" />
<path d="M1015.3 514.4H1019.5L1017.4 516.5Z" fill="#555" stroke="none" stroke-width="1" />
<line x1="0.00" y1="519.25" x2="1010.40" y2="519.25" stroke="#a6a6a6" stroke-width="0.8" />
<path d="M18 524.7L15.3 526.9L18 529.1Z" fill="#c4c4c4" stroke="none" stroke-width="1" />
<path d="M30.2 524.7L32.9 526.9L30.2 529.1Z" fill="#c4c4c4" stroke="none" stroke-width="1" />
<rect x="55.00" y="519.70" width="41.90" height="13.70" fill="#fff" />
<rect x="55.00" y="532.10" width="41.90" height="1.40" fill="#217346" />
<circle cx="119.75" cy="527.10" r="4.70" fill="none" stroke="#c2c2c2" stroke-width="0.7" />
<path d="M117.2 527.1H122.3M119.75 524.5V529.7" fill="none" stroke="#c2c2c2" stroke-width="0.8" />
<rect x="612.80" y="523.95" width="0.90" height="0.90" fill="#8c8c8c" />
<rect x="612.80" y="526.45" width="0.90" height="0.90" fill="#8c8c8c" />
<rect x="612.80" y="528.95" width="0.90" height="0.90" fill="#8c8c8c" />
<line x1="632.10" y1="522.75" x2="632.10" y2="531.25" stroke="#c8c8c8" stroke-width="0.6" />
<rect x="622.00" y="522.75" width="9.70" height="8.50" fill="#fff" />
<path d="M627.6 525L625.2 527L627.6 529Z" fill="#555" stroke="none" stroke-width="1" />
<rect x="632.50" y="522.75" width="352.00" height="8.50" fill="#fff" />
<rect x="984.50" y="522.75" width="15.50" height="8.50" fill="#d9d9d9" />
<rect x="1000.40" y="522.75" width="10.00" height="8.50" fill="#fff" />
<path d="M1005 525.1L1007.2 527.1L1005 529.1Z" fill="#555" stroke="none" stroke-width="1" />
<rect x="0.00" y="534.20" width="1024.00" height="12.80" fill="#f3f3f3" />
<line x1="0.00" y1="534.20" x2="1024.00" y2="534.20" stroke="#cdcdcd" stroke-width="0.7" />
<rect x="826.00" y="535.25" width="25.90" height="11.75" fill="#c6c6c6" />
<path d="M834.6 538.2H843.3V545.8H834.6ZM837.5 538.2V545.8M840.4 538.2V545.8M834.6 540.7H843.3M834.6 543.3H843.3" fill="none" stroke="#666" stroke-width="0.7" />
<path d="M861.2 538.2H869.6V545.8H861.2ZM863 538.2V545.8M867.8 538.2V545.8" fill="none" stroke="#777" stroke-width="0.7" />
<rect x="864.00" y="540.00" width="2.80" height="4.20" fill="none" stroke="#999" stroke-width=".5"/>
<path d="M887.3 538.2H896.7V545.8H887.3ZM890.2 538.2V542.5H893.4V538.2" fill="none" stroke="#777" stroke-width="0.7" />
<line x1="909.50" y1="541.80" x2="914.10" y2="541.80" stroke="#777" stroke-width="0.8" />
<line x1="918.25" y1="542.30" x2="984.10" y2="542.30" stroke="#a0a0a0" stroke-width="0.6" />
<rect x="950.00" y="538.40" width="2.90" height="7.50" fill="#555" />
<path d="M987.9 541.8H992.5M990.2 539.5V544.1" fill="none" stroke="#777" stroke-width="0.8" />
</svg>
<div id="labels">
<span class="t" style="font-size:8.3px;color:#fff;transform:translate(485.90px,6.10px) rotate(.06deg) scaleX(0.8921);-webkit-text-stroke:.08px #fff;">Book1</span>
<span class="t" style="font-size:8.3px;color:#fff;transform:translate(512.50px,6.10px) rotate(.06deg) scaleX(0.9011);-webkit-text-stroke:.08px #fff;">-</span>
<span class="t" style="font-size:8.3px;color:#fff;transform:translate(520.00px,6.10px) rotate(.06deg) scaleX(0.8495);-webkit-text-stroke:.08px #fff;">Excel</span>
<span class="t" style="font-size:8.3px;color:#fff;transform:translate(821.70px,6.20px) rotate(.06deg) scaleX(0.9112);-webkit-text-stroke:.08px #fff;">Annie Sanjana</span>
<span class="t" style="font-size:6.6px;color:#666;transform:translate(882.40px,7.60px) rotate(.06deg) scaleX(0.9201);-webkit-text-stroke:0;">AS</span>
<span class="t" style="font-size:8.3px;color:#fff;transform:translate(13.50px,28.60px) rotate(.06deg) scaleX(0.8891);-webkit-text-stroke:.08px #fff;">File</span>
<span class="t" style="font-size:8.3px;color:#217346;transform:translate(46.90px,28.60px) rotate(.06deg) scaleX(0.9865);">Home</span>
<span class="t" style="font-size:8.3px;color:#fff;transform:translate(83.40px,28.60px) rotate(.06deg) scaleX(0.9074);-webkit-text-stroke:.08px #fff;">Insert</span>
<span class="t" style="font-size:8.3px;color:#fff;transform:translate(116.90px,28.60px) rotate(.06deg) scaleX(0.9120);-webkit-text-stroke:.08px #fff;">Page Layout</span>
<span class="t" style="font-size:8.3px;color:#fff;transform:translate(173.75px,28.60px) rotate(.06deg) scaleX(0.9324);-webkit-text-stroke:.08px #fff;">Formulas</span>
<span class="t" style="font-size:8.3px;color:#fff;transform:translate(220.60px,28.60px) rotate(.06deg) scaleX(0.9407);-webkit-text-stroke:.08px #fff;">Data</span>
<span class="t" style="font-size:8.3px;color:#fff;transform:translate(251.90px,28.60px) rotate(.06deg) scaleX(0.9182);-webkit-text-stroke:.08px #fff;">Review</span>
<span class="t" style="font-size:8.3px;color:#fff;transform:translate(291.25px,28.60px) rotate(.06deg) scaleX(0.9438);-webkit-text-stroke:.08px #fff;">View</span>
<span class="t" style="font-size:8.3px;color:#fff;transform:translate(322.75px,28.60px) rotate(.06deg) scaleX(0.9949);-webkit-text-stroke:.08px #fff;">Help</span>
<span class="t" style="font-size:8.3px;color:#fff;transform:translate(374.40px,28.60px) rotate(.06deg) scaleX(0.9766);-webkit-text-stroke:.08px #fff;">Tell me what you want to do</span>
<span class="t" style="font-size:8.3px;color:#fff;transform:translate(990.00px,29.80px) rotate(.06deg) scaleX(0.8398);-webkit-text-stroke:.08px #fff;">Share</span>
<span class="t" style="font-size:8.3px;color:#444;transform:translate(10.60px,70.50px) rotate(.06deg) scaleX(0.8244);">Paste</span>
<span class="t" style="font-size:8.3px;color:#444;transform:translate(47.90px,48.60px) rotate(.06deg) scaleX(0.9164);">Cut</span>
<span class="t" style="font-size:8.3px;color:#444;transform:translate(47.90px,63.90px) rotate(.06deg) scaleX(0.9338);">Copy</span>
<span class="t" style="font-size:8.3px;color:#444;transform:translate(48.10px,79.25px) rotate(.06deg) scaleX(0.9292);">Format Painter</span>
<span class="t" style="font-size:7.5px;color:#5c5c5c;transform:translate(33.10px,95.50px) rotate(.06deg) scaleX(0.9621);">Clipboard</span>
<span class="t" style="font-size:8.3px;color:#444;transform:translate(116.50px,53.60px) rotate(.06deg) scaleX(0.9565);">Calibri</span>
<span class="t" style="font-size:8.3px;color:#444;transform:translate(185.10px,53.60px) rotate(.06deg) scaleX(0.8455);">11</span>
<span class="t" style="font-size:8.3px;color:#444;transform:translate(221.00px,53.90px) rotate(.06deg) scaleX(1.0080);">A</span>
<span class="t" style="font-size:7.4px;color:#444;transform:translate(235.40px,54.90px) rotate(.06deg) scaleX(1.0515);">A</span>
<span class="t" style="font-size:8.3px;color:#444;transform:translate(119.00px,74.25px) rotate(.06deg) scaleX(0.8321);font-weight:bold;">B</span>
<span class="t" style="font-size:8.6px;color:#444;transform:translate(135.60px,74.25px) rotate(.06deg) scaleX(1.0985);font-style:italic;font-family:'Liberation Serif',serif;font-weight:bold;">I</span>
<span class="t" style="font-size:8.1px;color:#444;transform:translate(149.25px,75.00px) rotate(.06deg) scaleX(0.8947);">U</span>
<span class="t" style="font-size:9px;color:#444;transform:translate(227.00px,73.00px) rotate(.06deg) scaleX(1.0788);">A</span>
<span class="t" style="font-size:7.5px;color:#5c5c5c;transform:translate(167.75px,95.50px) rotate(.06deg) scaleX(0.8487);">Font</span>
<span class="t" style="font-size:6.2px;color:#666;transform:translate(311.20px,55.20px) rotate(-45deg);transform-origin:0 100%;">ab</span>
<span class="t" style="font-size:6px;color:#555;transform:translate(345.60px,52.30px) rotate(.06deg) scaleX(1.0457);-webkit-text-stroke:.1px #555;">ab</span>
<span class="t" style="font-size:5.6px;color:#555;transform:translate(345.80px,57.80px) rotate(.06deg);-webkit-text-stroke:.1px #555;">c</span>
<span class="t" style="font-size:8.3px;color:#444;transform:translate(356.75px,53.60px) rotate(.06deg) scaleX(0.9648);">Wrap Text</span>
<span class="t" style="font-size:8.3px;color:#444;transform:translate(356.75px,74.25px) rotate(.06deg) scaleX(0.9618);">Merge &amp; Center</span>
<span class="t" style="font-size:7.5px;color:#5c5c5c;transform:translate(320.10px,95.50px) rotate(.06deg) scaleX(0.9231);">Alignment</span>
<span class="t" style="font-size:8.3px;color:#444;transform:translate(439.25px,53.60px) rotate(.06deg) scaleX(0.8971);">General</span>
<span class="t" style="font-size:10px;color:#555;transform:translate(463.60px,73.40px) rotate(.06deg) scaleX(0.9140);">%</span>
<span class="t" style="font-size:14px;color:#444;transform:translate(480.30px,66.60px) rotate(.06deg) scaleX(0.8962);font-weight:bold;">,</span>
<span class="t" style="font-size:4.6px;color:#555;transform:translate(501.50px,75.20px) rotate(.06deg) scaleX(1.1952);-webkit-text-stroke:0;">.0</span>
<span class="t" style="font-size:4.6px;color:#555;transform:translate(499.80px,79.70px) rotate(.06deg) scaleX(0.9851);-webkit-text-stroke:0;">.00</span>
<span class="t" style="font-size:4.6px;color:#555;transform:translate(514.60px,75.20px) rotate(.06deg) scaleX(1.0163);-webkit-text-stroke:0;">.00</span>
<span class="t" style="font-size:4.6px;color:#555;transform:translate(516.50px,79.70px) rotate(.06deg) scaleX(1.1952);-webkit-text-stroke:0;">.0</span>
<span class="t" style="font-size:7.5px;color:#5c5c5c;transform:translate(463.00px,95.50px) rotate(.06deg) scaleX(0.9271);">Number</span>
<span class="t" style="font-size:8.3px;color:#444;transform:translate(538.25px,70.50px) rotate(.06deg) scaleX(0.9814);">Conditional</span>
<span class="t" style="font-size:8.3px;color:#444;transform:translate(537.00px,81.10px) rotate(.06deg) scaleX(0.9555);">Formatting</span>
<span class="t" style="font-size:8.3px;color:#444;transform:translate(583.90px,70.50px) rotate(.06deg) scaleX(0.9125);">Format as</span>
<span class="t" style="font-size:8.3px;color:#444;transform:translate(589.25px,81.10px) rotate(.06deg) scaleX(0.8941);">Table</span>
<span class="t" style="font-size:9.4px;color:#111;transform:translate(625.75px,53.00px) rotate(.06deg) scaleX(0.9709);">Normal</span>
<span class="t" style="font-size:9.4px;color:#9c0006;transform:translate(697.00px,53.00px) rotate(.06deg) scaleX(0.8624);">Bad</span>
<span class="t" style="font-size:9.4px;color:#006100;transform:translate(625.75px,72.40px) rotate(.06deg) scaleX(0.9151);">Good</span>
<span class="t" style="font-size:9.4px;color:#9c5700;transform:translate(697.00px,72.40px) rotate(.06deg) scaleX(0.9506);">Neutral</span>
<span class="t" style="font-size:7.5px;color:#5c5c5c;transform:translate(646.00px,95.50px) rotate(.06deg) scaleX(0.8437);">Styles</span>
<span class="t" style="font-size:8.3px;color:#444;transform:translate(790.90px,70.50px) rotate(.06deg) scaleX(0.8905);">Insert</span>
<span class="t" style="font-size:8.3px;color:#444;transform:translate(816.50px,70.50px) rotate(.06deg) scaleX(0.9274);">Delete</span>
<span class="t" style="font-size:8.3px;color:#444;transform:translate(843.00px,70.50px) rotate(.06deg) scaleX(0.9414);">Format</span>
<span class="t" style="font-size:7.5px;color:#5c5c5c;transform:translate(820.00px,95.50px) rotate(.06deg) scaleX(0.8393);">Cells</span>
<span class="t" style="font-size:11.5px;color:#444;transform:translate(883.60px,48.00px) rotate(.06deg) scaleX(1.0532);">Σ</span>
<span class="t" style="font-size:8.3px;color:#444;transform:translate(895.25px,48.60px) rotate(.06deg) scaleX(0.9327);">AutoSum</span>
<span class="t" style="font-size:8.3px;color:#444;transform:translate(895.25px,63.90px) rotate(.06deg) scaleX(0.9088);">Fill</span>
<span class="t" style="font-size:8.3px;color:#444;transform:translate(895.25px,79.25px) rotate(.06deg) scaleX(0.8948);">Clear</span>
<span class="t" style="font-size:9.6px;color:#2f74c0;transform:translate(945.60px,48.30px) rotate(.06deg) scaleX(1.0130);">A</span>
<span class="t" style="font-size:9.6px;color:#a55fc4;transform:translate(946.00px,57.40px) rotate(.06deg) scaleX(0.9516);">Z</span>
<span class="t" style="font-size:8.3px;color:#444;transform:translate(942.90px,70.50px) rotate(.06deg) scaleX(0.9752);">Sort &amp;</span>
<span class="t" style="font-size:8.3px;color:#444;transform:translate(943.25px,81.10px) rotate(.06deg) scaleX(0.9297);">Filter</span>
<span class="t" style="font-size:8.3px;color:#444;transform:translate(971.60px,70.50px) rotate(.06deg) scaleX(0.9503);">Find &amp;</span>
<span class="t" style="font-size:8.3px;color:#444;transform:translate(970.00px,81.10px) rotate(.06deg) scaleX(0.8994);">Select</span>
<span class="t" style="font-size:7.5px;color:#5c5c5c;transform:translate(927.90px,95.50px) rotate(.06deg) scaleX(0.9239);">Editing</span>
<span class="t" style="font-size:8.3px;color:#444;transform:translate(7.25px,114.90px) rotate(.06deg) scaleX(0.8854);">A1</span>
<span class="t" style="font-size:10.6px;color:#555;transform:translate(147.20px,113.50px) rotate(.06deg);font-style:italic;font-family:'Liberation Serif',serif;">f</span>
<span class="t" style="font-size:8.8px;color:#555;transform:translate(150.70px,114.90px) rotate(.06deg);font-style:italic;font-family:'Liberation Serif',serif;">x</span>
<span class="t" style="font-size:8.3px;color:#444;transform:translate(172.80px,115.00px) rotate(.06deg) scaleX(1.0331);">Hey Angel by One Direction</span>
<span class="t" style="font-size:9.3px;color:#217346;transform:translate(29.33px,135.70px) rotate(.06deg) scaleX(.88);width:20px;text-align:center;transform-origin:50% 50%;">A</span>
<span class="t" style="font-size:9.3px;color:#444;transform:translate(71.97px,135.70px) rotate(.06deg) scaleX(.88);width:20px;text-align:center;transform-origin:50% 50%;">B</span>
<span class="t" style="font-size:9.3px;color:#444;transform:translate(114.62px,135.70px) rotate(.06deg) scaleX(.88);width:20px;text-align:center;transform-origin:50% 50%;">C</span>
<span class="t" style="font-size:9.3px;color:#444;transform:translate(157.28px,135.70px) rotate(.06deg) scaleX(.88);width:20px;text-align:center;transform-origin:50% 50%;">D</span>
<span class="t" style="font-size:9.3px;color:#444;transform:translate(199.92px,135.70px) rotate(.06deg) scaleX(.88);width:20px;text-align:center;transform-origin:50% 50%;">E</span>
<span class="t" style="font-size:9.3px;color:#444;transform:translate(242.57px,135.70px) rotate(.06deg) scaleX(.88);width:20px;text-align:center;transform-origin:50% 50%;">F</span>
<span class="t" style="font-size:9.3px;color:#444;transform:translate(285.22px,135.70px) rotate(.06deg) scaleX(.88);width:20px;text-align:center;transform-origin:50% 50%;">G</span>
<span class="t" style="font-size:9.3px;color:#444;transform:translate(327.88px,135.70px) rotate(.06deg) scaleX(.88);width:20px;text-align:center;transform-origin:50% 50%;">H</span>
<span class="t" style="font-size:9.3px;color:#444;transform:translate(370.52px,135.70px) rotate(.06deg) scaleX(.88);width:20px;text-align:center;transform-origin:50% 50%;">I</span>
<span class="t" style="font-size:9.3px;color:#444;transform:translate(413.18px,135.70px) rotate(.06deg) scaleX(.88);width:20px;text-align:center;transform-origin:50% 50%;">J</span>
<span class="t" style="font-size:9.3px;color:#444;transform:translate(455.82px,135.70px) rotate(.06deg) scaleX(.88);width:20px;text-align:center;transform-origin:50% 50%;">K</span>
<span class="t" style="font-size:9.3px;color:#444;transform:translate(498.47px,135.70px) rotate(.06deg) scaleX(.88);width:20px;text-align:center;transform-origin:50% 50%;">L</span>
<span class="t" style="font-size:9.3px;color:#444;transform:translate(541.12px,135.70px) rotate(.06deg) scaleX(.88);width:20px;text-align:center;transform-origin:50% 50%;">M</span>
<span class="t" style="font-size:9.3px;color:#444;transform:translate(583.77px,135.70px) rotate(.06deg) scaleX(.88);width:20px;text-align:center;transform-origin:50% 50%;">N</span>
<span class="t" style="font-size:9.3px;color:#444;transform:translate(626.42px,135.70px) rotate(.06deg) scaleX(.88);width:20px;text-align:center;transform-origin:50% 50%;">O</span>
<span class="t" style="font-size:9.3px;color:#444;transform:translate(669.07px,135.70px) rotate(.06deg) scaleX(.88);width:20px;text-align:center;transform-origin:50% 50%;">P</span>
<span class="t" style="font-size:9.3px;color:#444;transform:translate(711.73px,135.70px) rotate(.06deg) scaleX(.88);width:20px;text-align:center;transform-origin:50% 50%;">Q</span>
<span class="t" style="font-size:9.3px;color:#444;transform:translate(754.38px,135.70px) rotate(.06deg) scaleX(.88);width:20px;text-align:center;transform-origin:50% 50%;">R</span>
<span class="t" style="font-size:9.3px;color:#444;transform:translate(797.02px,135.70px) rotate(.06deg) scaleX(.88);width:20px;text-align:center;transform-origin:50% 50%;">S</span>
<span class="t" style="font-size:9.3px;color:#444;transform:translate(839.67px,135.70px) rotate(.06deg) scaleX(.88);width:20px;text-align:center;transform-origin:50% 50%;">T</span>
<span class="t" style="font-size:9.3px;color:#444;transform:translate(882.32px,135.70px) rotate(.06deg) scaleX(.88);width:20px;text-align:center;transform-origin:50% 50%;">U</span>
<span class="t" style="font-size:9.3px;color:#444;transform:translate(924.98px,135.70px) rotate(.06deg) scaleX(.88);width:20px;text-align:center;transform-origin:50% 50%;">V</span>
<span class="t" style="font-size:9.3px;color:#444;transform:translate(967.62px,135.70px) rotate(.06deg) scaleX(.88);width:20px;text-align:center;transform-origin:50% 50%;">W</span>
<span class="t" style="font-size:9.3px;color:#217346;transform:translate(0.00px,186.90px) rotate(.06deg) scaleX(.86);width:17.6px;text-align:center;transform-origin:50% 50%;">1</span>
<span class="t" style="font-size:9.3px;color:#444;transform:translate(0.00px,199.95px) rotate(.06deg) scaleX(.86);width:17.6px;text-align:center;transform-origin:50% 50%;">2</span>
<span class="t" style="font-size:9.3px;color:#444;transform:translate(0.00px,212.75px) rotate(.06deg) scaleX(.86);width:17.6px;text-align:center;transform-origin:50% 50%;">3</span>
<span class="t" style="font-size:9.3px;color:#444;transform:translate(0.00px,225.55px) rotate(.06deg) scaleX(.86);width:17.6px;text-align:center;transform-origin:50% 50%;">4</span>
<span class="t" style="font-size:9.3px;color:#444;transform:translate(0.00px,238.35px) rotate(.06deg) scaleX(.86);width:17.6px;text-align:center;transform-origin:50% 50%;">5</span>
<span class="t" style="font-size:9.3px;color:#444;transform:translate(0.00px,251.15px) rotate(.06deg) scaleX(.86);width:17.6px;text-align:center;transform-origin:50% 50%;">6</span>
<span class="t" style="font-size:9.3px;color:#444;transform:translate(0.00px,263.95px) rotate(.06deg) scaleX(.86);width:17.6px;text-align:center;transform-origin:50% 50%;">7</span>
<span class="t" style="font-size:9.3px;color:#444;transform:translate(0.00px,276.75px) rotate(.06deg) scaleX(.86);width:17.6px;text-align:center;transform-origin:50% 50%;">8</span>
<span class="t" style="font-size:9.3px;color:#444;transform:translate(0.00px,289.55px) rotate(.06deg) scaleX(.86);width:17.6px;text-align:center;transform-origin:50% 50%;">9</span>
<span class="t" style="font-size:9.3px;color:#444;transform:translate(0.00px,302.35px) rotate(.06deg) scaleX(.86);width:17.6px;text-align:center;transform-origin:50% 50%;">10</span>
<span class="t" style="font-size:9.3px;color:#444;transform:translate(0.00px,315.15px) rotate(.06deg) scaleX(.86);width:17.6px;text-align:center;transform-origin:50% 50%;">11</span>
<span class="t" style="font-size:9.3px;color:#444;transform:translate(0.00px,327.95px) rotate(.06deg) scaleX(.86);width:17.6px;text-align:center;transform-origin:50% 50%;">12</span>
<span class="t" style="font-size:9.3px;color:#444;transform:translate(0.00px,340.75px) rotate(.06deg) scaleX(.86);width:17.6px;text-align:center;transform-origin:50% 50%;">13</span>
<span class="t" style="font-size:9.3px;color:#444;transform:translate(0.00px,353.55px) rotate(.06deg) scaleX(.86);width:17.6px;text-align:center;transform-origin:50% 50%;">14</span>
<span class="t" style="font-size:9.3px;color:#444;transform:translate(0.00px,366.35px) rotate(.06deg) scaleX(.86);width:17.6px;text-align:center;transform-origin:50% 50%;">15</span>
<span class="t" style="font-size:9.3px;color:#444;transform:translate(0.00px,379.15px) rotate(.06deg) scaleX(.86);width:17.6px;text-align:center;transform-origin:50% 50%;">16</span>
<span class="t" style="font-size:9.3px;color:#444;transform:translate(0.00px,391.95px) rotate(.06deg) scaleX(.86);width:17.6px;text-align:center;transform-origin:50% 50%;">17</span>
<span class="t" style="font-size:9.3px;color:#444;transform:translate(0.00px,404.75px) rotate(.06deg) scaleX(.86);width:17.6px;text-align:center;transform-origin:50% 50%;">18</span>
<span class="t" style="font-size:9.3px;color:#444;transform:translate(0.00px,417.55px) rotate(.06deg) scaleX(.86);width:17.6px;text-align:center;transform-origin:50% 50%;">19</span>
<span class="t" style="font-size:9.3px;color:#444;transform:translate(0.00px,430.35px) rotate(.06deg) scaleX(.86);width:17.6px;text-align:center;transform-origin:50% 50%;">20</span>
<span class="t" style="font-size:9.3px;color:#444;transform:translate(0.00px,443.15px) rotate(.06deg) scaleX(.86);width:17.6px;text-align:center;transform-origin:50% 50%;">21</span>
<span class="t" style="font-size:9.3px;color:#444;transform:translate(0.00px,455.95px) rotate(.06deg) scaleX(.86);width:17.6px;text-align:center;transform-origin:50% 50%;">22</span>
<span class="t" style="font-size:9.3px;color:#444;transform:translate(0.00px,468.75px) rotate(.06deg) scaleX(.86);width:17.6px;text-align:center;transform-origin:50% 50%;">23</span>
<span class="t" style="font-size:9.3px;color:#444;transform:translate(0.00px,481.55px) rotate(.06deg) scaleX(.86);width:17.6px;text-align:center;transform-origin:50% 50%;">24</span>
<span class="t" style="font-size:9.3px;color:#444;transform:translate(0.00px,494.35px) rotate(.06deg) scaleX(.86);width:17.6px;text-align:center;transform-origin:50% 50%;">25</span>
<span class="t" style="font-size:9.3px;color:#444;transform:translate(0.00px,507.15px) rotate(.06deg) scaleX(.86);width:17.6px;text-align:center;transform-origin:50% 50%;">26</span>
<span class="t" style="font-size:8.7px;color:#1a1a1a;transform:translate(20.00px,161.30px) rotate(.06deg) scaleX(0.9617);">Hey Angel</span>
<span class="t" style="font-size:8.7px;color:#1a1a1a;transform:translate(20.00px,174.10px) rotate(.06deg) scaleX(0.9599);">by One</span>
<span class="t" style="font-size:8.7px;color:#1a1a1a;transform:translate(20.00px,186.80px) rotate(.06deg) scaleX(1.0207);">Direction</span>
<span class="t" style="font-size:15.6px;color:#111;transform:translate(713.50px,356.60px) rotate(.06deg) scaleX(1.0355);">developerpublish.com</span>
<span class="t" style="font-size:8.3px;color:#217346;transform:translate(61.50px,520.75px) rotate(.06deg) scaleX(1.0376);font-weight:bold;">Sheet1</span>
<span class="t" style="font-size:7.8px;color:#444;transform:translate(5.60px,538.25px) rotate(.06deg) scaleX(0.8335);">Ready</span>
<span class="t" style="font-size:7.8px;color:#444;transform:translate(1002.25px,538.60px) rotate(.06deg) scaleX(0.7840);">100%</span>
</div>
</div>
</body></html>
